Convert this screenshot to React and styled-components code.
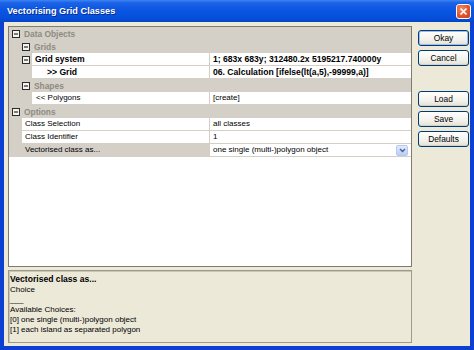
import React from "react";
import styled, { createGlobalStyle } from "styled-components";

const GlobalStyle = createGlobalStyle`
  html, body {
    margin: 0;
    padding: 0;
    background: #0a3fcf;
  }
  body {
    font-family: "Liberation Sans", Arial, sans-serif;
    font-size: 8px;
    color: #000;
  }
`;

const GRAY = "#d4d0c8";

const Window = styled.div`
  width: 474px;
  height: 350px;
  display: flex;
  flex-direction: column;
  background: #0b40d2;
  overflow: hidden;
`;

const TitleBar = styled.div`
  height: 22px;
  flex: none;
  display: flex;
  align-items: center;
  padding: 0 3px 0 7px;
  background: linear-gradient(
    to bottom,
    #3d86f5 0%,
    #1d63e6 12%,
    #0a55e2 45%,
    #0650dc 80%,
    #0445c8 100%
  );
  color: #fff;
  font-weight: bold;
  font-size: 9.2px;
  text-shadow: 1px 1px 0 #0b2a8a;
`;

const CloseButton = styled.div`
  margin-left: auto;
  width: 15px;
  height: 15px;
  box-sizing: border-box;
  border: 1px solid #fff;
  border-radius: 3px;
  background: radial-gradient(circle at 35% 30%, #f08a66 0%, #e0552c 55%, #c73e16 100%);
  display: flex;
  align-items: center;
  justify-content: center;
`;

const Body = styled.div`
  flex: 1;
  display: flex;
  gap: 6px;
  margin: 0 4px 4px;
  padding: 4px 1px 3px 4px;
  background: #ece9d8;
`;

const LeftColumn = styled.div`
  width: 404px;
  display: flex;
  flex-direction: column;
  gap: 3px;
`;

const Grid = styled.div`
  height: 241px;
  box-sizing: border-box;
  border: 1px solid #7f7c6f;
  background: #fff;
`;

const CatRow = styled.div`
  height: 13px;
  display: flex;
  align-items: center;
  gap: 4px;
  padding-left: ${p => p.$indent}px;
  background: ${GRAY};
  color: #8e8b82;
  font-weight: bold;
  font-size: 8.4px;
`;

const Row = styled.div`
  height: 13px;
  display: grid;
  grid-template-columns: 200px 1fr;
  background: ${GRAY};
`;

const NameSide = styled.div`
  display: flex;
`;

const Margin = styled.div`
  width: ${p => p.$width}px;
  flex: none;
  display: flex;
  align-items: center;
  padding-left: ${p => p.$boxAt}px;
  box-sizing: border-box;
`;

const NameCell = styled.div`
  flex: 1;
  height: 12px;
  line-height: 12px;
  padding-left: ${p => p.$pad}px;
  background: ${p => (p.$selected ? GRAY : "#fff")};
  border-bottom: 1px solid ${GRAY};
  font-weight: ${p => (p.$bold ? "bold" : "normal")};
  font-size: ${p => (p.$bold ? 8.6 : 8)}px;
  white-space: nowrap;
  overflow: hidden;
`;

const ValueCell = styled.div`
  height: 12px;
  line-height: 12px;
  display: flex;
  align-items: center;
  padding-left: 3px;
  background: #fff;
  border-left: 1px solid ${GRAY};
  border-bottom: 1px solid ${GRAY};
  font-weight: ${p => (p.$bold ? "bold" : "normal")};
  font-size: ${p => (p.$bold ? 8.6 : 8)}px;
  white-space: nowrap;
  overflow: hidden;
`;

const ComboButton = styled.div`
  margin-left: auto;
  margin-right: 3px;
  width: 12px;
  height: 11px;
  box-sizing: border-box;
  border: 1px solid #b7c9f2;
  border-radius: 2px;
  background: linear-gradient(to bottom, #e2ebfe, #b9cdf7);
  display: flex;
  align-items: center;
  justify-content: center;
`;

const Description = styled.div`
  flex: 1;
  box-sizing: border-box;
  border: 1px solid #9d9a8c;
  box-shadow: inset 1px 1px 0 #c9c6b8;
  padding: 2px 1px;
  background: #ece9d8;
`;

const DescTitle = styled.div`
  font-weight: bold;
  font-size: 8.6px;
  line-height: 12px;
`;

const DescLine = styled.div`
  line-height: 10px;
  white-space: pre;
`;

const RightColumn = styled.div`
  width: 51px;
  display: flex;
  flex-direction: column;
  gap: 4px;
  padding-top: 4px;
`;

const Button = styled.div`
  height: 16px;
  box-sizing: border-box;
  margin-top: ${p => (p.$spaced ? 21 : 0)}px;
  border: 1px solid #003c74;
  border-radius: 3px;
  background: linear-gradient(to bottom, #ffffff 0%, #f3f2ec 60%, #e3e0d5 100%);
  box-shadow: ${p =>
    p.$default ? "inset 0 0 0 1px #9fbdf0" : "inset 0 -1px 0 #d6d0c0"};
  display: flex;
  align-items: center;
  justify-content: center;
  font-size: 8.4px;
`;

const Expander = () => (
  <svg width="8" height="8" viewBox="0 0 8 8">
    <rect x="0.5" y="0.5" width="7" height="7" fill="#f4f3ee" stroke="#2b2b2b" />
    <line x1="2" y1="4" x2="6" y2="4" stroke="#000" />
  </svg>
);

const rows = [
  { type: "cat", indent: 3, label: "Data Objects" },
  { type: "cat", indent: 13, label: "Grids" },
  {
    type: "item",
    margin: 23,
    expander: true,
    name: "Grid system",
    value: "1; 683x 683y; 312480.2x 5195217.740000y",
    bold: true
  },
  {
    type: "item",
    margin: 23,
    pad: 15,
    name: ">> Grid",
    value: "06. Calculation [ifelse(lt(a,5),-99999,a)]",
    bold: true
  },
  { type: "cat", indent: 13, label: "Shapes" },
  { type: "item", margin: 23, pad: 4, name: "<< Polygons", value: "[create]" },
  { type: "cat", indent: 3, label: "Options" },
  { type: "item", margin: 12, name: "Class Selection", value: "all classes" },
  { type: "item", margin: 12, name: "Class Identifier", value: "1" },
  {
    type: "item",
    margin: 12,
    name: "Vectorised class as...",
    value: "one single (multi-)polygon object",
    selected: true,
    combo: true
  }
];

const PropertyRow = ({ row }) => {
  if (row.type === "cat") {
    return (
      <CatRow $indent={row.indent}>
        <Expander />
        {row.label}
      </CatRow>
    );
  }
  return (
    <Row>
      <NameSide>
        <Margin $width={row.margin} $boxAt={13}>
          {row.expander && <Expander />}
        </Margin>
        <NameCell $pad={row.pad || 3} $bold={row.bold} $selected={row.selected}>
          {row.name}
        </NameCell>
      </NameSide>
      <ValueCell $bold={row.bold}>
        {row.value}
        {row.combo && (
          <ComboButton>
            <svg width="7" height="5" viewBox="0 0 7 5">
              <path d="M1 1 L3.5 3.5 L6 1" fill="none" stroke="#4a5f8c" strokeWidth="1.4" />
            </svg>
          </ComboButton>
        )}
      </ValueCell>
    </Row>
  );
};

export default function App() {
  return (
    <Window>
      <GlobalStyle />
      <TitleBar>
        Vectorising Grid Classes
        <CloseButton>
          <svg width="9" height="9" viewBox="0 0 9 9">
            <path d="M1.5 1.5 L7.5 7.5 M7.5 1.5 L1.5 7.5" stroke="#fff" strokeWidth="1.6" />
          </svg>
        </CloseButton>
      </TitleBar>
      <Body>
        <LeftColumn>
          <Grid>
            {rows.map((row, i) => (
              <PropertyRow key={i} row={row} />
            ))}
          </Grid>
          <Description>
            <DescTitle>Vectorised class as...</DescTitle>
            <DescLine>Choice</DescLine>
            <DescLine>___</DescLine>
            <DescLine>Available Choices:</DescLine>
            <DescLine>[0] one single (multi-)polygon object</DescLine>
            <DescLine>[1] each island as separated polygon</DescLine>
          </Description>
        </LeftColumn>
        <RightColumn>
          <Button $default>Okay</Button>
          <Button>Cancel</Button>
          <Button $spaced>Load</Button>
          <Button>Save</Button>
          <Button>Defaults</Button>
        </RightColumn>
      </Body>
    </Window>
  );
}
